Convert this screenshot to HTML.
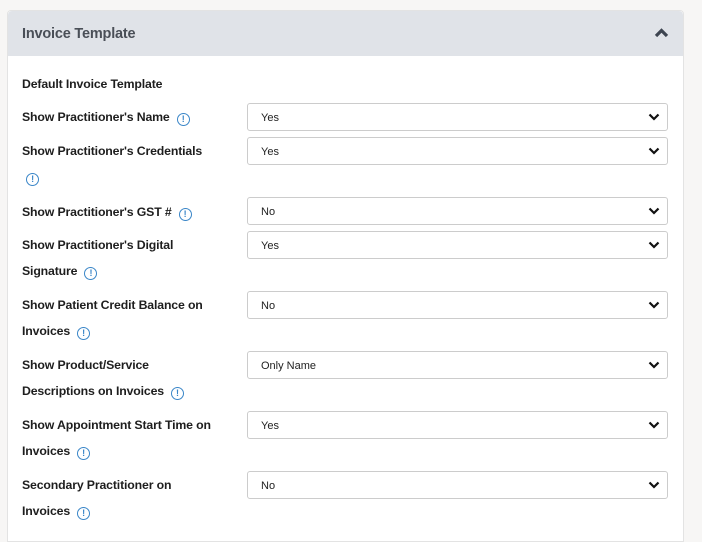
<!DOCTYPE html>
<html><head><style>
body{margin:0;width:702px;height:522px;background:#f7f6f5;position:relative;overflow:hidden;font-family:"Liberation Sans",sans-serif}
.panel{position:absolute;left:7px;top:10px;width:675px;height:530px;background:#fff;border:1px solid #e3e3e3;border-radius:4px 4px 0 0}
.hdr{position:absolute;left:0;top:0;right:0;height:45px;background:#e0e3e8;border-radius:4px 4px 0 0}
.hdr span{position:absolute;left:14px;top:15px;font-size:14.5px;color:#4a4f57;font-weight:bold;letter-spacing:-0.2px}
.t{position:absolute;left:22px;font-size:12.3px;font-weight:bold;color:#1e1e1e;line-height:16px;white-space:nowrap;letter-spacing:-0.15px}
.i{display:inline-block;width:11px;height:11px;border:1.3px solid #3a86c8;border-radius:50%;color:#3a86c8;font-size:9px;line-height:11px;text-align:center;vertical-align:-1px;margin-left:7px;font-weight:bold}
.s{position:absolute;left:247px;width:419px;height:26px;border:1px solid #ccc;border-radius:3px;background:#fff;font-size:11px;color:#222;line-height:28px;box-sizing:content-box}
.s span{position:absolute;left:13px}
.s svg{position:absolute;right:7px;top:9px}
</style></head><body>
<div class="panel"><div class="hdr"><span>Invoice Template</span>
<svg style="position:absolute;right:14px;top:16px" width="15" height="11" viewBox="0 0 15 11"><path d="M2 9 L7.5 3.5 L13 9" stroke="#3d4450" stroke-width="3.2" fill="none"/></svg></div></div>

<div class="t" style="top:76px">Default Invoice Template</div>
<div class="t" style="top:109px">Show Practitioner's Name<span class="i">!</span></div>
<div class="t" style="top:143px">Show Practitioner's Credentials</div>
<div class="t" style="top:169px"><span class="i" style="margin-left:4px">!</span></div>
<div class="t" style="top:204px">Show Practitioner's GST #<span class="i">!</span></div>
<div class="t" style="top:237px">Show Practitioner's Digital</div>
<div class="t" style="top:263px">Signature<span class="i">!</span></div>
<div class="t" style="top:297px">Show Patient Credit Balance on</div>
<div class="t" style="top:323px">Invoices<span class="i">!</span></div>
<div class="t" style="top:357px">Show Product/Service</div>
<div class="t" style="top:383px">Descriptions on Invoices<span class="i">!</span></div>
<div class="t" style="top:417px">Show Appointment Start Time on</div>
<div class="t" style="top:443px">Invoices<span class="i">!</span></div>
<div class="t" style="top:477px">Secondary Practitioner on</div>
<div class="t" style="top:503px">Invoices<span class="i">!</span></div>

<div class="s" style="top:103px"><span>Yes</span><svg width="12" height="8" viewBox="0 0 12 8"><path d="M1.5 1.5 L6 6 L10.5 1.5" stroke="#111" stroke-width="2.2" fill="none"/></svg></div>
<div class="s" style="top:137px"><span>Yes</span><svg width="12" height="8" viewBox="0 0 12 8"><path d="M1.5 1.5 L6 6 L10.5 1.5" stroke="#111" stroke-width="2.2" fill="none"/></svg></div>
<div class="s" style="top:197px"><span>No</span><svg width="12" height="8" viewBox="0 0 12 8"><path d="M1.5 1.5 L6 6 L10.5 1.5" stroke="#111" stroke-width="2.2" fill="none"/></svg></div>
<div class="s" style="top:231px"><span>Yes</span><svg width="12" height="8" viewBox="0 0 12 8"><path d="M1.5 1.5 L6 6 L10.5 1.5" stroke="#111" stroke-width="2.2" fill="none"/></svg></div>
<div class="s" style="top:291px"><span>No</span><svg width="12" height="8" viewBox="0 0 12 8"><path d="M1.5 1.5 L6 6 L10.5 1.5" stroke="#111" stroke-width="2.2" fill="none"/></svg></div>
<div class="s" style="top:351px"><span>Only Name</span><svg width="12" height="8" viewBox="0 0 12 8"><path d="M1.5 1.5 L6 6 L10.5 1.5" stroke="#111" stroke-width="2.2" fill="none"/></svg></div>
<div class="s" style="top:411px"><span>Yes</span><svg width="12" height="8" viewBox="0 0 12 8"><path d="M1.5 1.5 L6 6 L10.5 1.5" stroke="#111" stroke-width="2.2" fill="none"/></svg></div>
<div class="s" style="top:471px"><span>No</span><svg width="12" height="8" viewBox="0 0 12 8"><path d="M1.5 1.5 L6 6 L10.5 1.5" stroke="#111" stroke-width="2.2" fill="none"/></svg></div>
</body></html>
